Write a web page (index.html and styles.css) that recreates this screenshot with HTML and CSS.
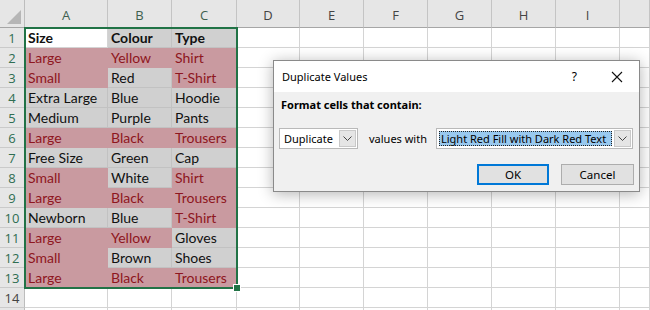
FILE: index.html
```html
<!DOCTYPE html>
<html>
<head>
<meta charset="utf-8">
<link rel="stylesheet" href="styles.css">
</head>
<body>
<div class="app">
  <div class="sheet">
    <div class="corner"><span class="tri"></span></div>
    <div class="ch sel">A</div><div class="ch sel">B</div><div class="ch sel">C</div>
    <div class="ch">D</div><div class="ch">E</div><div class="ch">F</div><div class="ch">G</div><div class="ch">H</div><div class="ch">I</div><div class="ch"></div>

    <div class="rh sel">1</div><div class="c active b">Size</div><div class="c g b">Colour</div><div class="c g b">Type</div><div class="c"></div><div class="c"></div><div class="c"></div><div class="c"></div><div class="c"></div><div class="c"></div><div class="c"></div>
    <div class="rh sel">2</div><div class="c p">Large</div><div class="c p">Yellow</div><div class="c p">Shirt</div><div class="c"></div><div class="c"></div><div class="c"></div><div class="c"></div><div class="c"></div><div class="c"></div><div class="c"></div>
    <div class="rh sel">3</div><div class="c p">Small</div><div class="c g">Red</div><div class="c p">T-Shirt</div><div class="c"></div><div class="c"></div><div class="c"></div><div class="c"></div><div class="c"></div><div class="c"></div><div class="c"></div>
    <div class="rh sel">4</div><div class="c g">Extra Large</div><div class="c g">Blue</div><div class="c g">Hoodie</div><div class="c"></div><div class="c"></div><div class="c"></div><div class="c"></div><div class="c"></div><div class="c"></div><div class="c"></div>
    <div class="rh sel">5</div><div class="c g">Medium</div><div class="c g">Purple</div><div class="c g">Pants</div><div class="c"></div><div class="c"></div><div class="c"></div><div class="c"></div><div class="c"></div><div class="c"></div><div class="c"></div>
    <div class="rh sel">6</div><div class="c p">Large</div><div class="c p">Black</div><div class="c p">Trousers</div><div class="c"></div><div class="c"></div><div class="c"></div><div class="c"></div><div class="c"></div><div class="c"></div><div class="c"></div>
    <div class="rh sel">7</div><div class="c g">Free Size</div><div class="c g">Green</div><div class="c g">Cap</div><div class="c"></div><div class="c"></div><div class="c"></div><div class="c"></div><div class="c"></div><div class="c"></div><div class="c"></div>
    <div class="rh sel">8</div><div class="c p">Small</div><div class="c g">White</div><div class="c p">Shirt</div><div class="c"></div><div class="c"></div><div class="c"></div><div class="c"></div><div class="c"></div><div class="c"></div><div class="c"></div>
    <div class="rh sel">9</div><div class="c p">Large</div><div class="c p">Black</div><div class="c p">Trousers</div><div class="c"></div><div class="c"></div><div class="c"></div><div class="c"></div><div class="c"></div><div class="c"></div><div class="c"></div>
    <div class="rh sel">10</div><div class="c g">Newborn</div><div class="c g">Blue</div><div class="c p">T-Shirt</div><div class="c"></div><div class="c"></div><div class="c"></div><div class="c"></div><div class="c"></div><div class="c"></div><div class="c"></div>
    <div class="rh sel">11</div><div class="c p">Large</div><div class="c p">Yellow</div><div class="c g">Gloves</div><div class="c"></div><div class="c"></div><div class="c"></div><div class="c"></div><div class="c"></div><div class="c"></div><div class="c"></div>
    <div class="rh sel">12</div><div class="c p">Small</div><div class="c g">Brown</div><div class="c g">Shoes</div><div class="c"></div><div class="c"></div><div class="c"></div><div class="c"></div><div class="c"></div><div class="c"></div><div class="c"></div>
    <div class="rh sel">13</div><div class="c p">Large</div><div class="c p">Black</div><div class="c p">Trousers</div><div class="c"></div><div class="c"></div><div class="c"></div><div class="c"></div><div class="c"></div><div class="c"></div><div class="c"></div>
    <div class="rh">14</div><div class="c"></div><div class="c"></div><div class="c"></div><div class="c"></div><div class="c"></div><div class="c"></div><div class="c"></div><div class="c"></div><div class="c"></div><div class="c"></div>
    <div class="rh"></div><div class="c"></div><div class="c"></div><div class="c"></div><div class="c"></div><div class="c"></div><div class="c"></div><div class="c"></div><div class="c"></div><div class="c"></div><div class="c"></div>
  </div>

  <div class="selection"><span class="handle"></span></div>

  <div class="dialog">
    <div class="title">
      <span class="title-text">Duplicate Values</span>
      <span class="help">?</span>
      <svg class="close" width="12" height="12" viewBox="0 0 12 12"><path d="M1 1 L11 11 M11 1 L1 11" stroke="#111" stroke-width="1.1" fill="none"/></svg>
    </div>
    <div class="body">
      <div class="label">Format cells that contain:</div>
      <div class="controls">
        <div class="combo small">
          <span class="combo-text">Duplicate</span>
          <span class="arrow"><svg width="9" height="5" viewBox="0 0 9 5"><path d="M0.5 0.5 L4.5 4.5 L8.5 0.5" stroke="#444" stroke-width="1" fill="none"/></svg></span>
        </div>
        <span class="with">values with</span>
        <div class="combo big">
          <span class="combo-text hl">Light Red Fill with Dark Red Text</span>
          <span class="arrow"><svg width="9" height="5" viewBox="0 0 9 5"><path d="M0.5 0.5 L4.5 4.5 L8.5 0.5" stroke="#444" stroke-width="1" fill="none"/></svg></span>
        </div>
      </div>
      <div class="buttons">
        <div class="btn ok">OK</div>
        <div class="btn">Cancel</div>
      </div>
    </div>
  </div>
</div>
</body>
</html>
```

FILE: styles.css
```css
html, body {
  margin: 0;
  padding: 0;
  background: #ffffff;
  overflow: hidden;
}
.app {
  position: relative;
  width: 650px;
  height: 310px;
  overflow: hidden;
  font-family: "Lato", "Open Sans", sans-serif;
}
.sheet {
  display: grid;
  grid-template-columns: 25px 83px 64px 65px 63px 64px 64px 64px 64px 64px 1fr;
  grid-template-rows: 28px repeat(15, 20px);
}
.sheet > div {
  box-sizing: border-box;
}
.corner {
  background: #e6e6e6;
  border-right: 1px solid #bdbdbd;
  border-bottom: 1px solid #a6a6a6;
  position: relative;
}
.tri {
  position: absolute;
  right: 3px;
  bottom: 3px;
  width: 0;
  height: 0;
  border-left: 14px solid transparent;
  border-bottom: 14px solid #b6b6b6;
}
.ch {
  background: #e6e6e6;
  border-right: 1px solid #c4c4c4;
  border-bottom: 1px solid #a6a6a6;
  font-family: "Open Sans", sans-serif;
  font-size: 13px;
  color: #444;
  display: flex;
  align-items: center;
  justify-content: center;
  padding-top: 2px;
}
.ch.sel {
  color: #3f5f4f;
}
.rh {
  background: #e6e6e6;
  border-right: 1px solid #bdbdbd;
  border-bottom: 1px solid #cacaca;
  font-family: "Open Sans", sans-serif;
  font-size: 13px;
  color: #444;
  display: flex;
  align-items: center;
  justify-content: center;
}
.rh.sel {
  color: #2f6e52;
}
.c {
  border-right: 1px solid #d4d4d4;
  border-bottom: 1px solid #d4d4d4;
  font-size: 14px;
  color: #111;
  padding-left: 3px;
  line-height: 20px;
  white-space: nowrap;
  overflow: hidden;
}
.c.b {
  font-weight: bold;
}
.c.active {
  background: #ffffff;
}
.c.g {
  background: #d0d0d0;
  border-color: #c2c2c2;
}
.c.p {
  background: #c99aa0;
  border-color: #c99aa0;
  color: #8e1620;
}
.selection {
  position: absolute;
  left: 24px;
  top: 27px;
  width: 214px;
  height: 262px;
  box-sizing: border-box;
  border: 2px solid #217346;
}
.handle {
  position: absolute;
  right: -5px;
  bottom: -5px;
  width: 6px;
  height: 6px;
  background: #217346;
  border: 1px solid #ffffff;
}
.dialog {
  position: absolute;
  left: 273px;
  top: 60px;
  width: 367px;
  height: 132px;
  box-sizing: border-box;
  border: 1px solid #8a8a8a;
  box-shadow: 0 2px 14px rgba(0, 0, 0, 0.3);
  display: flex;
  flex-direction: column;
  font-family: "Noto Sans", sans-serif;
  font-size: 11px;
  color: #000;
}
.title {
  height: 31px;
  background: #ffffff;
  display: flex;
  align-items: center;
  padding-left: 8px;
}
.title-text {
  flex: 1;
  font-size: 11px;
}
.help {
  font-size: 12px;
  margin-right: 34px;
}
.close {
  margin-right: 16px;
}
.body {
  flex: 1;
  background: #f0f0f0;
  padding: 5px 5px 0 5px;
}
.label {
  font-weight: bold;
  padding-left: 2px;
  line-height: 16px;
}
.controls {
  display: flex;
  align-items: center;
  margin-top: 15px;
  height: 21px;
}
.combo {
  box-sizing: border-box;
  flex-shrink: 0;
  height: 21px;
  background: #ffffff;
  border: 1px solid #b9b9b9;
  display: flex;
  align-items: center;
  padding: 1px;
}
.combo.small {
  width: 79px;
}
.combo.big {
  width: 197px;
  margin-left: 9px;
}
.combo-text {
  flex: 1;
  padding-left: 3px;
  line-height: 15px;
  white-space: nowrap;
}
.combo-text.hl {
  background: #99c9ef;
  outline: 1px dotted #222;
  outline-offset: -1px;
  padding-left: 2px;
  margin: 0 2px 0 1px;
}
.arrow {
  box-sizing: border-box;
  flex-shrink: 0;
  width: 17px;
  height: 17px;
  background: #e5e5e5;
  border: 1px solid #c9c9c9;
  display: flex;
  align-items: center;
  justify-content: center;
}
.with {
  margin-left: 11px;
  white-space: nowrap;
  flex-shrink: 0;
  font-size: 11px;
}
.buttons {
  display: flex;
  justify-content: flex-end;
  gap: 12px;
  margin-top: 15px;
}
.btn {
  box-sizing: border-box;
  width: 73px;
  height: 21px;
  background: #e1e1e1;
  border: 1px solid #adadad;
  display: flex;
  align-items: center;
  justify-content: center;
  font-size: 11.5px;
}
.btn.ok {
  border: 2px solid #0078d7;
  width: 72px;
}
```
